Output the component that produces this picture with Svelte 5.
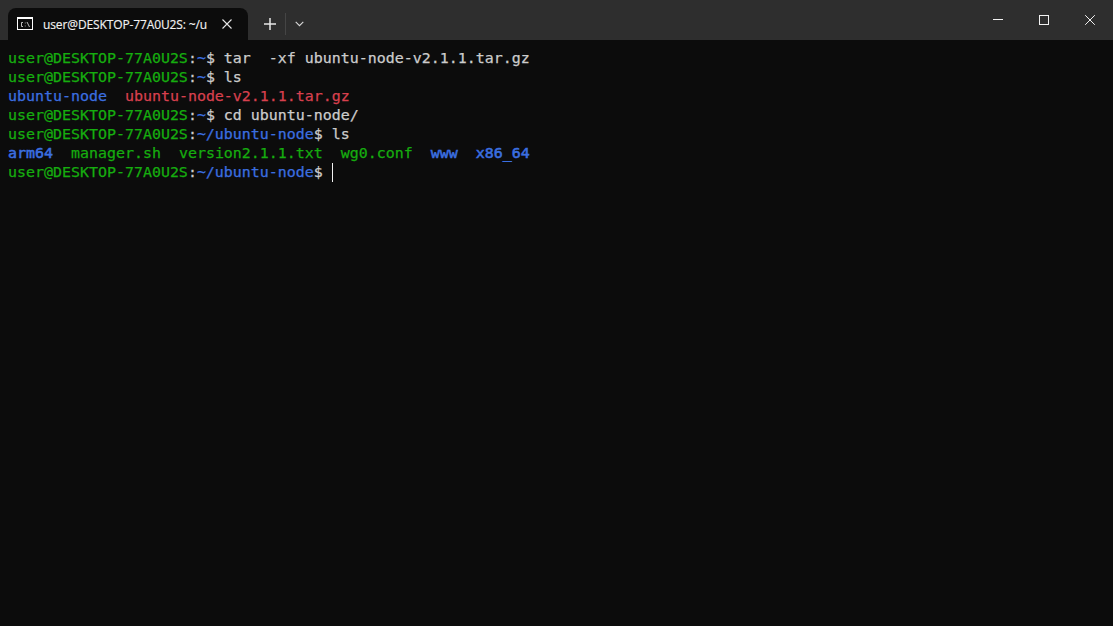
<script>
	// one entry per terminal row, each row a list of [css class, text]
	const prompt = 'user@DESKTOP-77A0U2S'
	const rows = [
		[['g', prompt], ['w', ':'], ['b', '~'], ['w', '$ tar  -xf ubuntu-node-v2.1.1.tar.gz']],
		[['g', prompt], ['w', ':'], ['b', '~'], ['w', '$ ls']],
		[['b', 'ubuntu-node'], ['w', '  '], ['r', 'ubuntu-node-v2.1.1.tar.gz']],
		[['g', prompt], ['w', ':'], ['b', '~'], ['w', '$ cd ubuntu-node/']],
		[['g', prompt], ['w', ':'], ['b', '~/ubuntu-node'], ['w', '$ ls']],
		[['b bold', 'arm64'], ['w', '  '], ['g', 'manager.sh'], ['w', '  '], ['g', 'version2.1.1.txt'], ['w', '  '], ['g', 'wg0.conf'], ['w', '  '], ['b bold', 'www'], ['w', '  '], ['b bold', 'x86_64']],
		[['g', prompt], ['w', ':'], ['b', '~/ubuntu-node'], ['w', '$ ']]
	]
</script>

<div class="window">
	<header class="titlebar">
		<div class="tab">
			<svg class="tab-icon" width="17" height="14" viewBox="0 0 17 14">
				<rect x="0.5" y="0.5" width="15" height="12" fill="none" stroke="#fff" />
				<rect x="0" y="0" width="16" height="2" fill="#fff" />
				<path d="M6 5.5 H4.5 V9.5 H6 M7.8 6 h.8 M7.8 9 h.8 M10 5 L12.5 10" fill="none" stroke="#d0d0d0" stroke-width="0.9" />
			</svg>
			<span class="tab-title">user@DESKTOP-77A0U2S: ~/u</span>
			<svg class="tab-close" width="10" height="10" viewBox="0 0 10 10">
				<path d="M0.5 0.5 L9.5 9.5 M9.5 0.5 L0.5 9.5" stroke="#e6e6e6" stroke-width="1.1" fill="none" />
			</svg>
		</div>
		<div class="tab-actions">
			<svg width="14" height="14" viewBox="0 0 14 14">
				<path d="M7 1 V13 M1 7 H13" stroke="#e8e8e8" stroke-width="1.5" fill="none" />
			</svg>
			<span class="divider"></span>
			<svg width="9" height="6" viewBox="0 0 9 6">
				<path d="M0.7 0.9 L4.5 4.7 L8.3 0.9" stroke="#d8d8d8" stroke-width="1.1" fill="none" />
			</svg>
		</div>
		<div class="caption">
			<div class="caption-btn">
				<svg width="10" height="10" viewBox="0 0 10 10"><path d="M0 4.5 H10" stroke="#f2f2f2" fill="none" /></svg>
			</div>
			<div class="caption-btn">
				<svg width="10" height="10" viewBox="0 0 10 10"><rect x="0.5" y="0.5" width="9" height="9" stroke="#f2f2f2" fill="none" /></svg>
			</div>
			<div class="caption-btn">
				<svg width="10" height="10" viewBox="0 0 10 10"><path d="M0.2 0.2 L9.8 9.8 M9.8 0.2 L0.2 9.8" stroke="#f2f2f2" fill="none" /></svg>
			</div>
		</div>
	</header>

	<main class="terminal">
		{#each rows as row, i}
			<div class="row">
				{#each row as [cls, text]}<span class={cls}>{text}</span>{/each}{#if i === rows.length - 1}<span class="cursor"></span>{/if}
			</div>
		{/each}
	</main>
</div>

<style>
	:global(body) {
		margin: 0;
		background: #0c0c0c;
	}

	.window {
		width: 1113px;
		height: 626px;
		display: flex;
		flex-direction: column;
		overflow: hidden;
	}

	.titlebar {
		height: 40px;
		flex: none;
		display: flex;
		align-items: flex-end;
		background: #2e2e2e;
		padding-left: 8px;
		box-sizing: border-box;
	}

	.tab {
		width: 240px;
		height: 32px;
		box-sizing: border-box;
		display: flex;
		align-items: center;
		padding: 0 16px 0 9px;
		background: #0c0c0c;
		border-radius: 8px 8px 0 0;
	}

	.tab-icon {
		flex: none;
		margin-right: 9px;
	}

	.tab-title {
		width: 164px;
		flex: none;
		white-space: nowrap;
		font-family: "Open Sans", "Liberation Sans", sans-serif;
		font-size: 12px;
		letter-spacing: -0.12px;
		color: #f2f2f2;
		-webkit-text-stroke: 0.15px #f2f2f2;
	}

	.tab-close {
		margin-left: 15px;
		flex: none;
	}

	.tab-actions {
		height: 32px;
		display: flex;
		align-items: center;
		padding-left: 15px;
	}

	.divider {
		width: 1px;
		height: 22px;
		background: #454545;
		margin: 0 9px 0 8px;
	}

	.caption {
		margin-left: auto;
		height: 40px;
		display: flex;
	}

	.caption-btn {
		width: 46px;
		height: 40px;
		display: flex;
		align-items: center;
		justify-content: center;
	}

	.terminal {
		flex: 1;
		padding: 9px 8px 0;
		font-family: "DejaVu Sans Mono", "Liberation Mono", monospace;
		font-size: 14.95px;
		line-height: 19px;
		color: #cccccc;
	}

	.row {
		height: 19px;
		white-space: pre;
		display: flex;
		align-items: center;
	}

	.g, .b, .r, .w {
		-webkit-text-stroke: 0.25px currentColor;
	}

	.g { color: #16ad0f; }
	.b { color: #3b6fe0; }
	.r { color: #d8404e; }
	.w { color: #cccccc; }
	.bold { -webkit-text-stroke-width: 0.55px; }

	.cursor {
		width: 1px;
		height: 19px;
		background: #f2f2f2;
	}
</style>
